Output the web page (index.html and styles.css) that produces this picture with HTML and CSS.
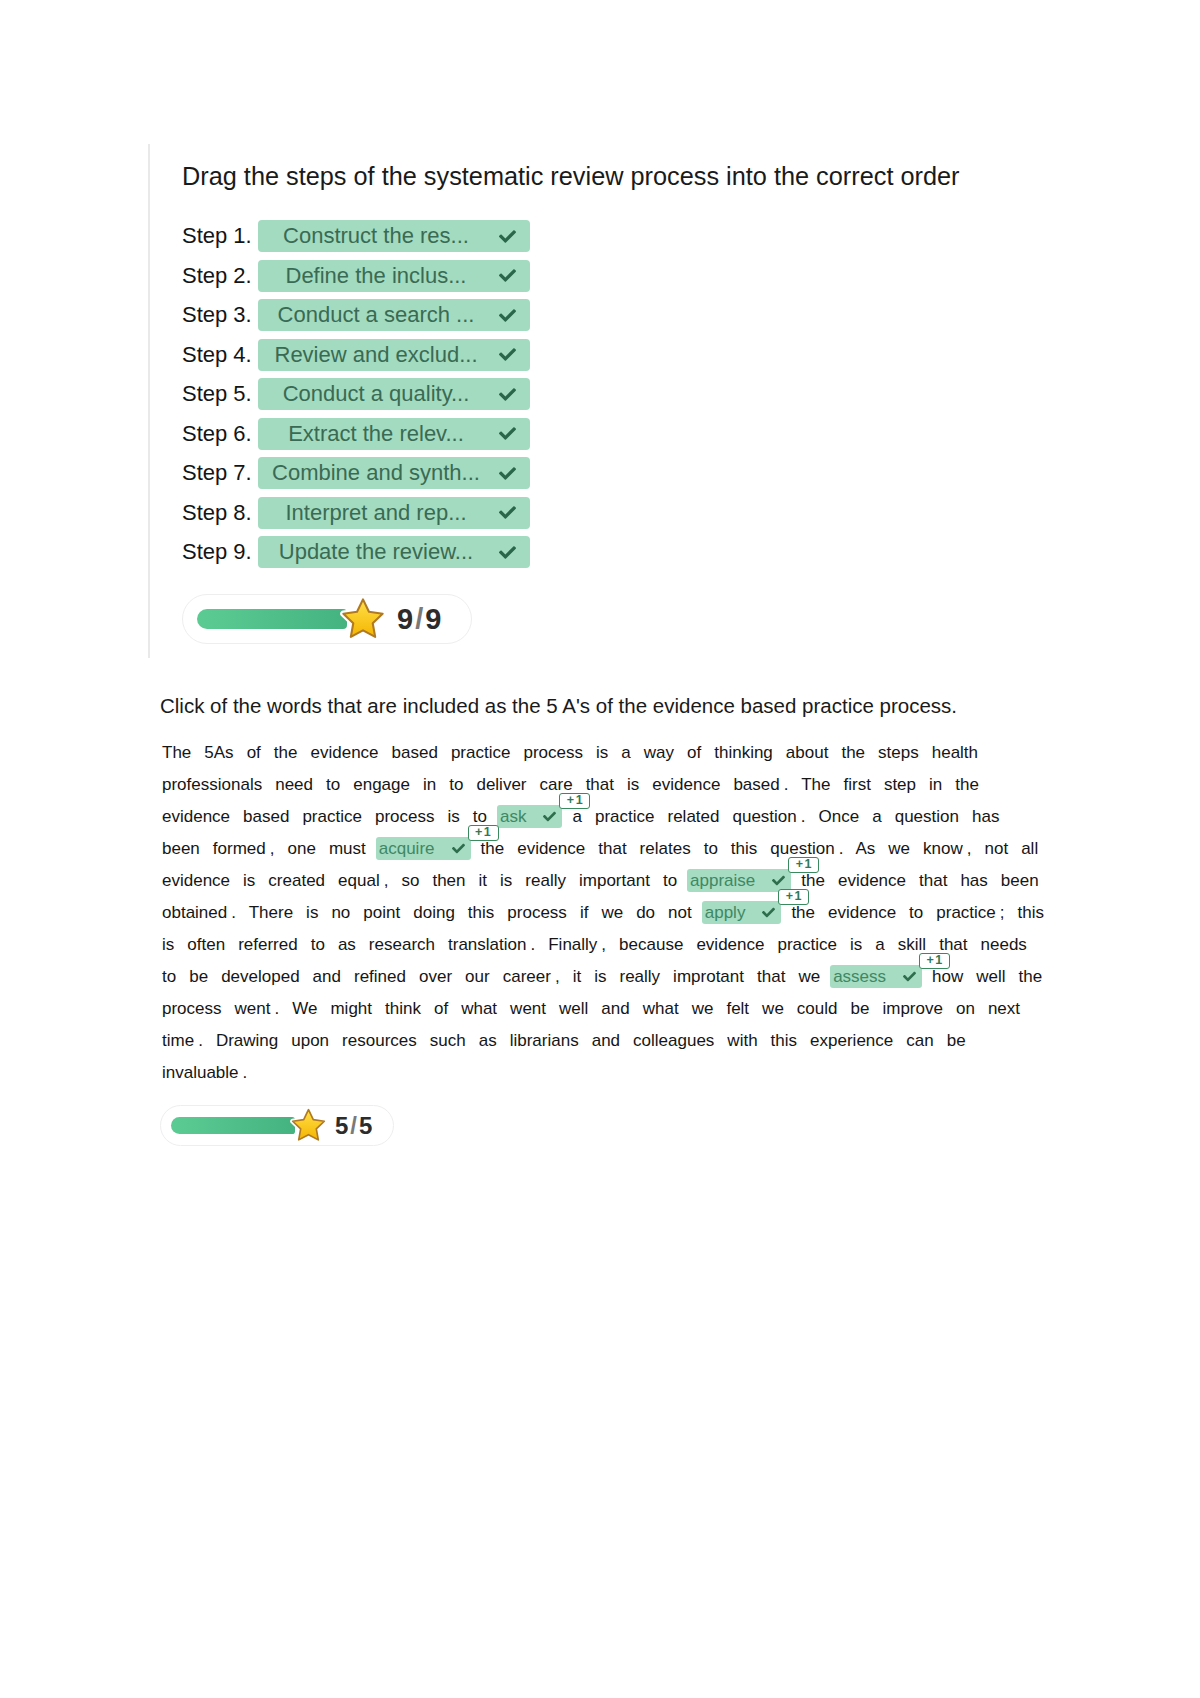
FILE: index.html
```html
<!DOCTYPE html>
<html lang="en">
<head>
<meta charset="utf-8">
<title>Systematic review quiz</title>
<link rel="stylesheet" href="styles.css">
</head>
<body>
<svg class="sprite" aria-hidden="true">
  <defs>
    <symbol id="chk" viewBox="0 0 512 512"><path d="M173.9 439.4l-166.4-166.4c-10-10-10-26.2 0-36.2l36.2-36.2c10-10 26.2-10 36.2 0L192 312.7 432.1 72.6c10-10 26.2-10 36.2 0l36.2 36.2c10 10 10 26.2 0 36.2l-294.4 294.4c-10 10-26.2 10-36.2 0z"/></symbol>
    <linearGradient id="starfill" x1="0" y1="0" x2="0" y2="1">
      <stop offset="0" stop-color="#ffe04a"/>
      <stop offset="1" stop-color="#f5b500"/>
    </linearGradient>
    <symbol id="star" viewBox="1 1 22 22">
      <path d="M12 2.6l2.85 5.95 6.55.92-4.75 4.58 1.17 6.5L12 17.45l-5.82 3.1 1.17-6.5L2.6 9.47l6.55-.92z" fill="none" stroke="#fff" stroke-width="3" stroke-linejoin="round"/>
      <path d="M12 2.6l2.85 5.95 6.55.92-4.75 4.58 1.17 6.5L12 17.45l-5.82 3.1 1.17-6.5L2.6 9.47l6.55-.92z" fill="url(#starfill)" stroke="#b07a22" stroke-width="1" stroke-linejoin="round"/>
    </symbol>
  </defs>
</svg>

<main class="page">
  <section class="quiz quiz-order">
    <h2 class="q-title">Drag the steps of the systematic review process into the correct order</h2>
    <ol class="steps">
      <li class="step"><span class="step-label">Step 1.</span><span class="step-box"><span class="step-text">Construct the res...</span><svg class="check"><use href="#chk"/></svg></span></li>
      <li class="step"><span class="step-label">Step 2.</span><span class="step-box"><span class="step-text">Define the inclus...</span><svg class="check"><use href="#chk"/></svg></span></li>
      <li class="step"><span class="step-label">Step 3.</span><span class="step-box"><span class="step-text">Conduct a search ...</span><svg class="check"><use href="#chk"/></svg></span></li>
      <li class="step"><span class="step-label">Step 4.</span><span class="step-box"><span class="step-text">Review and exclud...</span><svg class="check"><use href="#chk"/></svg></span></li>
      <li class="step"><span class="step-label">Step 5.</span><span class="step-box"><span class="step-text">Conduct a quality...</span><svg class="check"><use href="#chk"/></svg></span></li>
      <li class="step"><span class="step-label">Step 6.</span><span class="step-box"><span class="step-text">Extract the relev...</span><svg class="check"><use href="#chk"/></svg></span></li>
      <li class="step"><span class="step-label">Step 7.</span><span class="step-box"><span class="step-text">Combine and synth...</span><svg class="check"><use href="#chk"/></svg></span></li>
      <li class="step"><span class="step-label">Step 8.</span><span class="step-box"><span class="step-text">Interpret and rep...</span><svg class="check"><use href="#chk"/></svg></span></li>
      <li class="step"><span class="step-label">Step 9.</span><span class="step-box"><span class="step-text">Update the review...</span><svg class="check"><use href="#chk"/></svg></span></li>
    </ol>
    <div class="score score-lg">
      <span class="bar"></span>
      <svg class="star"><use href="#star"/></svg>
      <span class="score-text">9<span class="slash">/</span>9</span>
    </div>
  </section>

  <section class="quiz quiz-words">
    <h2 class="q-title2">Click of the words that are included as the 5 A's of the evidence based practice process.</h2>
    <p class="passage">The 5As of the evidence based practice process is a way of thinking about the steps health<br>
professionals need to engage in to deliver care that is evidence based<span class="pu">.</span> The first step in the<br>
evidence based practice process is to<span class="ans">ask<svg class="check"><use href="#chk"/></svg><span class="plus">+1</span></span>a practice related question<span class="pu">.</span> Once a question has<br>
been formed<span class="pu">,</span> one must<span class="ans">acquire<svg class="check"><use href="#chk"/></svg><span class="plus">+1</span></span>the evidence that relates to this question<span class="pu">.</span> As we know<span class="pu">,</span> not all<br>
evidence is created equal<span class="pu">,</span> so then it is really important to<span class="ans">appraise<svg class="check"><use href="#chk"/></svg><span class="plus">+1</span></span>the evidence that has been<br>
obtained<span class="pu">.</span> There is no point doing this process if we do not<span class="ans">apply<svg class="check"><use href="#chk"/></svg><span class="plus">+1</span></span>the evidence to practice<span class="pu">;</span> this<br>
is often referred to as research translation<span class="pu">.</span> Finally<span class="pu">,</span> because evidence practice is a skill that needs<br>
to be developed and refined over our career<span class="pu">,</span> it is really improtant that we<span class="ans">assess<svg class="check"><use href="#chk"/></svg><span class="plus">+1</span></span>how well the<br>
process went<span class="pu">.</span> We might think of what went well and what we felt we could be improve on next<br>
time<span class="pu">.</span> Drawing upon resources such as librarians and colleagues with this experience can be<br>
invaluable<span class="pu">.</span></p>
    <div class="score score-sm">
      <span class="bar"></span>
      <svg class="star"><use href="#star"/></svg>
      <span class="score-text">5<span class="slash">/</span>5</span>
    </div>
  </section>
</main>
</body>
</html>
```

FILE: styles.css
```css
html, body {
  margin: 0;
  padding: 0;
  background: #ffffff;
}

body {
  font-family: "Liberation Sans", Arial, sans-serif;
  color: #1b1b1b;
}

.sprite {
  display: block;
  width: 0;
  height: 0;
  overflow: hidden;
}

.page {
  padding-top: 144px;
}

/* ---------- question 1 ---------- */
.quiz-order {
  margin-left: 148px;
  border-left: 2px solid #e9e9e9;
  padding: 16px 0 14px 32px;
}

.q-title {
  margin: 0;
  font-weight: normal;
  font-size: 25.3px;
  line-height: 32px;
  color: #1a1a1a;
}

.steps {
  list-style: none;
  margin: 28px 0 0;
  padding: 0;
  display: flex;
  flex-direction: column;
  gap: 7.5px;
}

.step {
  display: flex;
  align-items: center;
  height: 32px;
}

.step-label {
  width: 76px;
  font-size: 22px;
  color: #141414;
}

.step-box {
  width: 272px;
  height: 32px;
  box-sizing: border-box;
  display: flex;
  align-items: center;
  padding-right: 13px;
  background: #a2dbc0;
  border-radius: 4px;
}

.step-text {
  flex: 1;
  text-align: center;
  font-size: 22px;
  color: #3a6a53;
  white-space: nowrap;
}

.step-box .check {
  width: 19px;
  height: 17px;
  margin-left: 4px;
  fill: #2a6649;
}

/* ---------- score pills ---------- */
.score {
  display: inline-flex;
  align-items: center;
  box-sizing: border-box;
  border: 1px solid #eeeeee;
  background: #fff;
}

.bar {
  display: block;
  background: linear-gradient(90deg, #5ccb93 0%, #45b380 100%);
}

.score-text {
  font-weight: bold;
  color: #2c2c2c;
}

.slash {
  color: #7a7a7a;
  margin: 0 2px;
  font-weight: bold;
}

.score-lg {
  margin-top: 26px;
  width: 290px;
  height: 50px;
  border-radius: 25px;
  padding-left: 14px;
}

.score-lg .bar {
  width: 150px;
  height: 20px;
  border-radius: 10px 4px 4px 10px;
}

.score-lg .star {
  width: 46px;
  height: 46px;
  margin-left: -7px;
}

.score-lg .score-text {
  margin-left: 11px;
  font-size: 29px;
}

.score-sm {
  margin-top: 16px;
  width: 234px;
  height: 41px;
  border-radius: 21px;
  padding-left: 10px;
}

.score-sm .bar {
  width: 124px;
  height: 17px;
  border-radius: 9px 3px 3px 9px;
}

.score-sm .star {
  width: 37px;
  height: 37px;
  margin-left: -5px;
}

.score-sm .score-text {
  margin-left: 8px;
  font-size: 24px;
}

/* ---------- question 2 ---------- */
.quiz-words {
  margin: 34px 0 0 160px;
}

.q-title2 {
  margin: 0;
  font-weight: normal;
  font-size: 20.5px;
  line-height: 28px;
  color: #1a1a1a;
}

.passage {
  margin: 17px 0 0;
  padding-left: 2px;
  width: 940px;
  font-size: 17px;
  line-height: 32px;
  word-spacing: 8.3px;
  color: #161616;
}

.pu {
  margin-left: 4px;
}

.ans {
  position: relative;
  display: inline-block;
  height: 23px;
  line-height: 23px;
  margin: 0 10px;
  padding: 0 5px 0 3px;
  background: #a5dcc2;
  border-radius: 3px;
  color: #3f8864;
  word-spacing: 0;
}

.ans .check {
  width: 15px;
  height: 13px;
  margin-left: 16px;
  fill: #2e6e4d;
  vertical-align: -1px;
}

.plus {
  position: absolute;
  left: calc(100% - 3px);
  top: -12px;
  width: 31px;
  height: 16px;
  box-sizing: border-box;
  border: 1.5px solid #3b8a5f;
  border-radius: 3px;
  background: #fff;
  font-size: 12.5px;
  font-weight: bold;
  line-height: 13px;
  letter-spacing: 1.5px;
  text-indent: 1px;
  text-align: center;
  color: #2f7a52;
  z-index: 1;
}
```
